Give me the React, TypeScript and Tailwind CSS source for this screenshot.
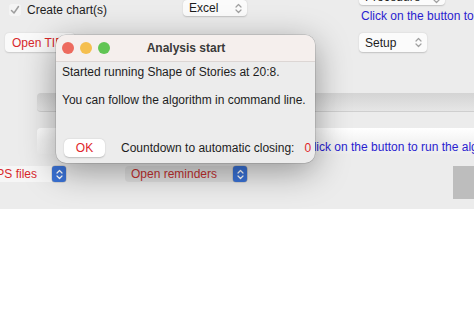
import React from 'react';

const UpDown: React.FC<{ color?: string }> = ({ color = '#a0a0a0' }) => (
  <svg width="7" height="11" viewBox="0 0 7 11" fill="none">
    <path d="M1 4 L3.5 1.5 L6 4" stroke={color} strokeWidth="1.2" strokeLinecap="round" strokeLinejoin="round" />
    <path d="M1 7 L3.5 9.5 L6 7" stroke={color} strokeWidth="1.2" strokeLinecap="round" strokeLinejoin="round" />
  </svg>
);

const BlueStepper: React.FC = () => (
  <div className="w-[14px] h-[16px] shrink-0 rounded-[3px] bg-[#3a72d6] flex items-center justify-center shadow-[0_0_0_0.5px_rgba(0,0,0,0.2)]">
    <UpDown color="#ffffff" />
  </div>
);

const Popup: React.FC<{ label: string; className?: string }> = ({ label, className }) => (
  <div
    className={`flex items-center justify-between bg-[#fbfbfb] rounded-[4px] shadow-[0_0.5px_1.5px_rgba(0,0,0,0.18)] pl-[6px] pr-[5px] text-[#1d1d1d] ${className ?? ''}`}
  >
    <span>{label}</span>
    <UpDown />
  </div>
);

const App: React.FC = () => {
  return (
    <div className="relative w-[474px] h-[323px] bg-white overflow-hidden font-['Liberation_Sans',Arial,sans-serif] text-[12px] leading-[14px]">
      {/* background window */}
      <div className="h-[209px] bg-[#ececec] flex flex-col">
        <div className="flex h-[93px]">
          <div className="w-[183px] shrink-0 flex flex-col">
            <div className="flex items-center gap-[6px] pl-[9px] pt-[2px] h-[17px]">
              <div className="w-[12px] h-[12px] rounded-[3px] bg-[#f4f4f4] flex items-center justify-center">
                <svg width="10" height="10" viewBox="0 0 10 10" fill="none">
                  <path d="M1.5 5.5 L4 8 L8.5 1.5" stroke="#9d9d9d" strokeWidth="1.5" strokeLinecap="round" strokeLinejoin="round" />
                </svg>
              </div>
              <span className="text-[#1d1d1d]">Create chart(s)</span>
            </div>
            <div className="ml-[5px] mt-[16px] w-[70px] h-[19px] bg-[#fafafa] rounded-[4px] shadow-[0_0.5px_1.5px_rgba(0,0,0,0.15)] flex items-center pl-[7px] text-[#d8282c]">
              Open TIF
            </div>
          </div>
          <div className="w-[176px] shrink-0">
            <Popup label="Excel" className="w-[64px] h-[16px]" />
          </div>
          <div className="flex-1 min-w-0 flex flex-col">
            <Popup label="Procedure" className="w-[86px] h-[17px] -mt-[12px] items-end pb-[1px]" />
            <div className="mt-[4px] whitespace-nowrap text-[#2a1ed0] pl-[2px]">Click on the button to run the algorithm</div>
            <Popup label="Setup" className="w-[68px] h-[19px] mt-[10px]" />
          </div>
        </div>

        <div className="ml-[37px] h-[19px] rounded-l-[4px] bg-gradient-to-b from-[#d4d4d4] to-[#e6e6e6] border-b border-[#cfcfcf]" />

        <div className="ml-[37px] mt-[16px] h-[26px] rounded-l-[4px] bg-gradient-to-b from-[#ffffff] via-[#f4f4f4] to-[#eeeeee] flex items-end overflow-hidden">
          <span className="pl-[268px] whitespace-nowrap text-[#2a1ed0]">Click on the button to run the algorithm</span>
        </div>

        <div className="flex mt-[12px] h-[34px]">
          <div className="flex items-start w-[125px] shrink-0">
            <div className="h-[16px] w-[52px] bg-[#f6f6f6] flex items-center pr-[15px] justify-end text-[#d8282c] whitespace-nowrap overflow-hidden">
              PS files
            </div>
            <BlueStepper />
          </div>
          <div className="flex items-start justify-between w-[123px] shrink-0 h-[16px] bg-[#dfdfdf] rounded-[4px] pl-[6px] pr-[1px]">
            <span className="text-[#c2302f] leading-[16px]">Open reminders</span>
            <BlueStepper />
          </div>
          <div className="flex-1" />
          <div className="w-[21px] h-[33px] bg-[#bdbdbd]" />
        </div>
      </div>

      {/* modal dialog */}
      <div className="absolute left-[56px] top-[35px] w-[259px] h-[128px] rounded-[10px] bg-[#ececec] shadow-[0_8px_34px_rgba(0,0,0,0.38),0_0_0_0.5px_rgba(0,0,0,0.2)] overflow-hidden flex flex-col">
        <div className="h-[27px] bg-[#f5efed] border-b border-[#dcd6d4] flex items-center relative">
          <div className="flex items-center gap-[6px] pl-[6px]">
            <div className="w-[12px] h-[12px] rounded-full bg-[#ed6a5e]" />
            <div className="w-[12px] h-[12px] rounded-full bg-[#f5bf4f]" />
            <div className="w-[12px] h-[12px] rounded-full bg-[#61c554]" />
          </div>
          <div className="absolute inset-0 flex items-center justify-center font-bold text-[#3a3a3a] pl-[1px]">
            Analysis start
          </div>
        </div>
        <div className="flex flex-col pl-[6px] text-[#1d1d1d]">
          <div className="mt-[3px]">Started running Shape of Stories at 20:8.</div>
          <div className="mt-[14px]">You can follow the algorithm in command line.</div>
          <div className="flex items-center mt-[32px]">
            <div className="ml-[2px] w-[41px] h-[18px] bg-white rounded-[5px] shadow-[0_0.5px_1.5px_rgba(0,0,0,0.2)] flex items-center justify-center text-[#e0262b]">
              OK
            </div>
            <span className="ml-[16px]">Countdown to automatic closing:</span>
            <span className="ml-[10px] text-[#e0262b]">0</span>
          </div>
        </div>
      </div>
    </div>
  );
};

export default App;
